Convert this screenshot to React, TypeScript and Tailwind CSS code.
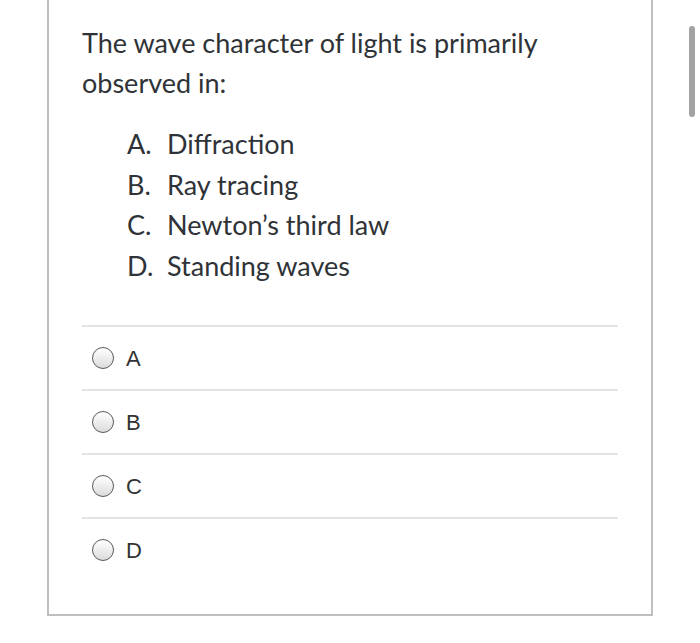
const OPTIONS = [
	{ key: "A.", text: "Diffraction" },
	{ key: "B.", text: "Ray tracing" },
	{ key: "C.", text: "Newton\u2019s third law" },
	{ key: "D.", text: "Standing waves" },
];

const ANSWERS = ["A", "B", "C", "D"];

function Radio() {
	return (
		<span className="block w-[22px] h-[22px] rounded-full border-[1.5px] border-[#5a5a5a] bg-gradient-to-b from-white to-[#dcdcdc] shrink-0" />
	);
}

export default function App() {
	return (
		<div className="relative w-[700px] h-[643px] bg-white overflow-hidden">
			{/* ── Question card (top edge is scrolled off) ─────────────── */}
			<div className="ml-[47px] w-[606px] border-x-2 border-b-2 border-[#bfbfbf] px-[33px] pt-[23px] pb-[33px]">
				<p className="font-['Lato',sans-serif] text-[27px] leading-[40px] text-[#2f3337] pr-[40px]">
					The wave character of light is primarily observed in:
				</p>

				<div className="mt-[21px] pl-[45px] font-['Lato',sans-serif] text-[27px] leading-[40.5px] text-[#2f3337]">
					{OPTIONS.map((o) => (
						<div key={o.key} className="flex">
							<span className="w-[40px]">{o.key}</span>
							<span>{o.text}</span>
						</div>
					))}
				</div>

				<div className="mt-[39px]">
					{ANSWERS.map((a) => (
						<div
							key={a}
							className="flex items-center gap-[12px] h-[64px] border-t-2 border-[#e4e4e4] pl-[10px]"
						>
							<Radio />
							<span className="font-['Liberation_Sans',sans-serif] text-[22px] text-[#333333]">
								{a}
							</span>
						</div>
					))}
				</div>
			</div>

			{/* scrollbar thumb */}
			<div className="absolute left-[689px] top-[26px] w-[6px] h-[91px] rounded-full bg-[#a3a3a3]" />
		</div>
	);
}
